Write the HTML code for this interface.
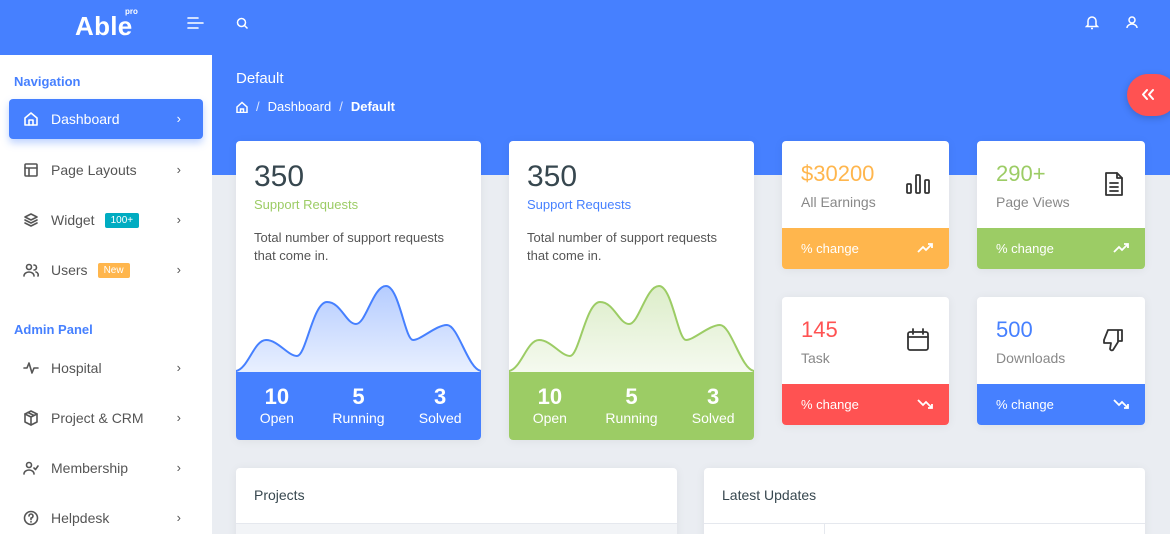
<!DOCTYPE html>
<html style="width:1170px;height:534px;overflow:hidden"><head><style>
*{box-sizing:border-box;margin:0;padding:0}
body{width:1170px;height:534px;overflow:hidden;background:#eaedf2;font-family:"Liberation Sans",sans-serif;position:relative}
.hdr{position:absolute;left:0;top:0;width:1170px;height:55px;background:#4680ff}
.band{position:absolute;left:212px;top:55px;width:958px;height:120px;background:#4680ff}
.side{position:absolute;left:0;top:55px;width:212px;height:479px;background:#fff}
.cap{position:absolute;left:14px;font-size:13px;font-weight:bold;color:#4680ff}
.item{position:absolute;left:9px;width:194px;height:40px;display:flex;align-items:center;padding-left:14px;font-size:14px;color:#555}
.item svg{width:16px;height:16px;margin-right:12px;fill:none;stroke:#555;stroke-width:1.6;stroke-linecap:round;stroke-linejoin:round}
.item .ch{position:absolute;right:22px;top:12px;font-size:13px}
.item.act{background:#4680ff;color:#fff;border-radius:4px;box-shadow:0 4px 8px rgba(70,128,255,.35)}
.item.act svg{stroke:#fff}
.badge{font-size:10px;color:#fff;padding:2px 6px;border-radius:2px;margin-left:10px}
.card{position:absolute;background:#fff;border-radius:4px;box-shadow:0 1px 10px rgba(0,0,0,.06);overflow:hidden}
.big{font-size:30px;color:#37474f}
.stats{position:absolute;left:0;bottom:0;width:100%;height:68px;display:flex;color:#fff;text-align:center}
.stats div{flex:1;padding-top:12px}
.stats b{display:block;font-size:22px}
.stats span{font-size:14px}
.sc .n{position:absolute;left:19px;top:20px;font-size:22px}
.sc .l{position:absolute;left:19px;top:53px;font-size:14px;color:#888}
.sc .f{position:absolute;left:0;bottom:0;width:100%;height:41px;color:#fff;font-size:13px;padding:13px 19px}
.sc svg.ic{position:absolute;right:18px;top:30px;width:26px;height:26px;fill:none;stroke:#333;stroke-width:1.8;stroke-linecap:round;stroke-linejoin:round}
.sc .tr{position:absolute;right:16px;top:13px;width:16px;height:14px;fill:none;stroke:#fff;stroke-width:1.8}
</style></head><body>
<div class="hdr"></div>
<div class="band"></div>
<div style="position:absolute;left:75px;top:11px;color:#fff;font-weight:bold;font-size:26px;letter-spacing:.3px">Able</div>
<div style="position:absolute;left:125px;top:7px;color:#fff;font-weight:bold;font-size:8px">pro</div>
<svg style="position:absolute;left:187px;top:16px" width="18" height="14" stroke="#fff" stroke-width="1.6" stroke-linecap="round"><line x1="1" y1="2" x2="11" y2="2"/><line x1="1" y1="7" x2="16" y2="7"/><line x1="1" y1="12" x2="11" y2="12"/></svg>
<svg style="position:absolute;left:236px;top:17px" width="13" height="13" fill="none" stroke="#fff" stroke-width="1.5"><circle cx="5.5" cy="5.5" r="4"/><line x1="8.5" y1="8.5" x2="11.5" y2="11.5"/></svg>
<svg style="position:absolute;left:1085px;top:15px" width="14" height="15" fill="none" stroke="#fff" stroke-width="1.5"><path d="M3 10V6a4 4 0 0 1 8 0v4l1.5 1.5h-11z"/><path d="M6 13.5h2"/></svg>
<svg style="position:absolute;left:1125px;top:15px" width="14" height="15" fill="none" stroke="#fff" stroke-width="1.5"><circle cx="7" cy="5" r="3"/><path d="M2 13a5 4 0 0 1 10 0"/></svg>
<div style="position:absolute;left:1127px;top:74px;width:50px;height:42px;border-radius:21px;background:#ff5252;box-shadow:0 2px 8px rgba(0,0,0,.2)"></div>
<svg style="position:absolute;left:1141px;top:88px" width="14" height="13" fill="none" stroke="#fff" stroke-width="2" stroke-linecap="round" stroke-linejoin="round"><path d="M6 2L2 6.5 6 11M12 2L8 6.5 12 11"/></svg>

<div class="side">
<div class="cap" style="top:19px">Navigation</div>
<div class="item act" style="top:44px"><svg viewBox="0 0 16 16"><path d="M2 7l6-5 6 5v7H2z"/><path d="M6 14V9h4v5"/></svg>Dashboard<span class="ch">›</span></div>
<div class="item" style="top:95px"><svg viewBox="0 0 16 16"><rect x="2" y="2" width="12" height="12" rx="1"/><path d="M2 6h12M6 6v8"/></svg>Page Layouts<span class="ch">›</span></div>
<div class="item" style="top:145px"><svg viewBox="0 0 16 16"><path d="M8 2l6 3-6 3-6-3z"/><path d="M2 8l6 3 6-3M2 11l6 3 6-3"/></svg>Widget<span class="badge" style="background:#00acc1">100+</span><span class="ch">›</span></div>
<div class="item" style="top:195px"><svg viewBox="0 0 16 16"><circle cx="6" cy="5" r="2.5"/><path d="M1 14a5 4 0 0 1 10 0M11 3a2.5 2.5 0 0 1 0 5M13 10a3 3 0 0 1 2 4"/></svg>Users<span class="badge" style="background:#ffb64d">New</span><span class="ch">›</span></div>
<div class="cap" style="top:267px">Admin Panel</div>
<div class="item" style="top:293px"><svg viewBox="0 0 16 16"><path d="M1 8h3l2-5 3 10 2-5h4"/></svg>Hospital<span class="ch">›</span></div>
<div class="item" style="top:343px"><svg viewBox="0 0 16 16"><path d="M8 1l6 3v8l-6 3-6-3V4z"/><path d="M2 4l6 3 6-3M8 7v8M5 2.5l6 3"/></svg>Project &amp; CRM<span class="ch">›</span></div>
<div class="item" style="top:393px"><svg viewBox="0 0 16 16"><circle cx="6" cy="5" r="2.5"/><path d="M1 14a5 4 0 0 1 10 0M11 8l1.5 1.5L15 6"/></svg>Membership<span class="ch">›</span></div>
<div class="item" style="top:443px"><svg viewBox="0 0 16 16"><circle cx="8" cy="8" r="6.5"/><path d="M6 6a2 2 0 1 1 2 2v1.5M8 11.5v.5"/></svg>Helpdesk<span class="ch">›</span></div>
</div>

<div style="position:absolute;left:236px;top:70px;color:#fff;font-size:15px">Default</div>
<div style="position:absolute;left:236px;top:99px;color:#fff;font-size:13px;display:flex;align-items:center;gap:8px"><svg width="12" height="12" fill="none" stroke="#fff" stroke-width="1.5"><path d="M1 6l5-4.5 5 4.5v5.5H1z"/><path d="M4.5 11.5V8h3v3.5"/></svg><span style="opacity:.8">/</span>Dashboard<span style="opacity:.8">/</span><b>Default</b></div>

<div class="card" style="left:236px;top:141px;width:245px;height:299px">
<div class="big" style="position:absolute;left:18px;top:19px">350</div>
<div style="position:absolute;left:18px;top:56px;font-size:13px;color:#9ccc65">Support Requests</div>
<div style="position:absolute;left:18px;top:88px;font-size:13px;color:#555;line-height:18px;width:215px">Total number of support requests that come in.</div>
<svg style="position:absolute;left:0;top:140px" width="245" height="92"><defs><linearGradient id="g1" x1="0" y1="0" x2="0" y2="1"><stop offset="0" stop-color="#4680ff" stop-opacity=".4"/><stop offset="1" stop-color="#4680ff" stop-opacity=".12"/></linearGradient></defs>
<path d="M0 90C12 88 18 59 30 59S52 75 61 75 77 21 91 21 110 43 120 43 137 5 150 5 169 59 177 59 200 44 211 44 232 88 245 90V92H0Z" fill="url(#g1)" stroke="#4680ff" stroke-width="2"/></svg>
<div class="stats" style="background:#4680ff"><div><b>10</b><span>Open</span></div><div><b>5</b><span>Running</span></div><div><b>3</b><span>Solved</span></div></div>
</div>
<div class="card" style="left:509px;top:141px;width:245px;height:299px">
<div class="big" style="position:absolute;left:18px;top:19px">350</div>
<div style="position:absolute;left:18px;top:56px;font-size:13px;color:#4680ff">Support Requests</div>
<div style="position:absolute;left:18px;top:88px;font-size:13px;color:#555;line-height:18px;width:215px">Total number of support requests that come in.</div>
<svg style="position:absolute;left:0;top:140px" width="245" height="92"><defs><linearGradient id="g2" x1="0" y1="0" x2="0" y2="1"><stop offset="0" stop-color="#9ccc65" stop-opacity=".35"/><stop offset="1" stop-color="#9ccc65" stop-opacity=".1"/></linearGradient></defs>
<path d="M0 90C12 88 18 59 30 59S52 75 61 75 77 21 91 21 110 43 120 43 137 5 150 5 169 59 177 59 200 44 211 44 232 88 245 90V92H0Z" fill="url(#g2)" stroke="#9ccc65" stroke-width="2"/></svg>
<div class="stats" style="background:#9ccc65"><div><b>10</b><span>Open</span></div><div><b>5</b><span>Running</span></div><div><b>3</b><span>Solved</span></div></div>
</div>

<div class="card sc" style="left:782px;top:141px;width:167px;height:128px">
<div class="n" style="color:#ffb64d">$30200</div><div class="l">All Earnings</div>
<svg class="ic" viewBox="0 0 26 26"><rect x="2" y="13" width="4" height="9" rx="1"/><rect x="11" y="4" width="4" height="18" rx="1"/><rect x="20" y="9" width="4" height="13" rx="1"/></svg>
<div class="f" style="background:#ffb64d">% change<svg class="tr" viewBox="0 0 16 14"><path d="M1 11l5-5 3 3 6-6M11 3h4v4"/></svg></div></div>
<div class="card sc" style="left:977px;top:141px;width:168px;height:128px">
<div class="n" style="color:#9ccc65">290+</div><div class="l">Page Views</div>
<svg class="ic" viewBox="0 0 26 26"><path d="M5 2h11l5 5v17H5z"/><path d="M16 2v5h5M9 12h8M9 16h8M9 20h8"/></svg>
<div class="f" style="background:#9ccc65">% change<svg class="tr" viewBox="0 0 16 14"><path d="M1 11l5-5 3 3 6-6M11 3h4v4"/></svg></div></div>
<div class="card sc" style="left:782px;top:297px;width:167px;height:128px">
<div class="n" style="color:#ff5252">145</div><div class="l">Task</div>
<svg class="ic" viewBox="0 0 26 26"><rect x="3" y="5" width="20" height="18" rx="2"/><path d="M3 10h20M8 2v5M18 2v5"/></svg>
<div class="f" style="background:#ff5252">% change<svg class="tr" viewBox="0 0 16 14"><path d="M1 3l5 5 3-3 6 6M11 11h4V7"/></svg></div></div>
<div class="card sc" style="left:977px;top:297px;width:168px;height:128px">
<div class="n" style="color:#4680ff">500</div><div class="l">Downloads</div>
<svg class="ic" viewBox="0 0 26 26"><path d="M17 3H7L3 13v3h7l-1 6a2 2 0 0 0 3 1l5-8V3zM17 3h4v11h-4"/></svg>
<div class="f" style="background:#4680ff">% change<svg class="tr" viewBox="0 0 16 14"><path d="M1 3l5 5 3-3 6 6M11 11h4V7"/></svg></div></div>

<div class="card" style="left:236px;top:468px;width:441px;height:80px"><div style="position:absolute;left:18px;top:19px;font-size:14px;color:#37474f">Projects</div><div style="position:absolute;left:0;top:55px;width:100%;height:1px;background:#e5e8ee"></div><div style="position:absolute;left:0;top:56px;width:100%;height:20px;background:#f2f4f7"></div></div>
<div class="card" style="left:704px;top:468px;width:441px;height:80px"><div style="position:absolute;left:18px;top:19px;font-size:14px;color:#37474f">Latest Updates</div><div style="position:absolute;left:0;top:55px;width:100%;height:1px;background:#e5e8ee"></div><div style="position:absolute;left:120px;top:55px;width:1px;height:20px;background:#e5e8ee"></div></div>
</body></html>
